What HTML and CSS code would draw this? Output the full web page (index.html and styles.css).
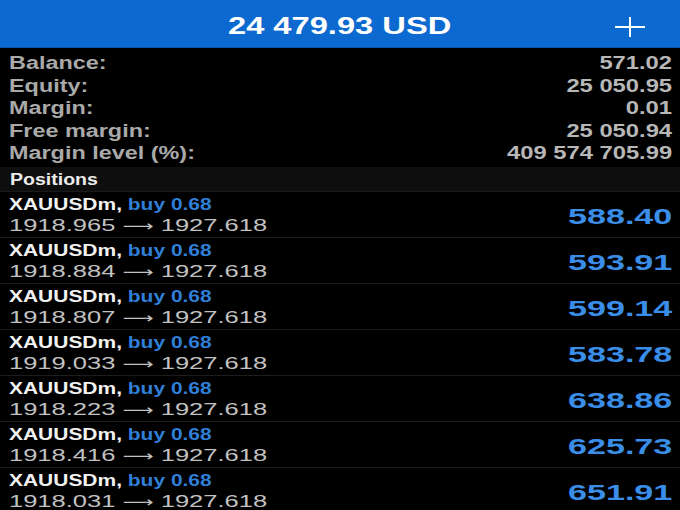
FILE: index.html
```html
<!DOCTYPE html>
<html>
<head>
<meta charset="utf-8">
<link rel="stylesheet" href="styles.css">
</head>
<body>
<div class="app">
  <header class="topbar">
    <div class="title"><span class="sx">24 479.93 USD</span></div>
    <button class="add" aria-label="add">
      <svg width="32" height="22" viewBox="0 0 32 22"><path d="M1 11H31M16 1V21" stroke="#ffffff" stroke-width="2" fill="none"/></svg>
    </button>
  </header>
  <section class="summary">
    <div class="srow"><span class="lbl sx">Balance:</span><span class="val sx">571.02</span></div>
    <div class="srow"><span class="lbl sx">Equity:</span><span class="val sx">25 050.95</span></div>
    <div class="srow"><span class="lbl sx">Margin:</span><span class="val sx">0.01</span></div>
    <div class="srow"><span class="lbl sx">Free margin:</span><span class="val sx">25 050.94</span></div>
    <div class="srow"><span class="lbl sx">Margin level (%):</span><span class="val sx">409 574 705.99</span></div>
  </section>
  <div class="sect"><span class="sx">Positions</span></div>
  <ul class="positions">
    <li class="pos"><div class="info"><div class="name"><span class="sx">XAUUSDm, <span class="buy">buy 0.68</span></span></div><div class="price"><span class="sx">1918.965 <span class="arr">⟶</span> 1927.618</span></div></div><div class="profit"><span class="sx">588.40</span></div></li>
    <li class="pos"><div class="info"><div class="name"><span class="sx">XAUUSDm, <span class="buy">buy 0.68</span></span></div><div class="price"><span class="sx">1918.884 <span class="arr">⟶</span> 1927.618</span></div></div><div class="profit"><span class="sx">593.91</span></div></li>
    <li class="pos"><div class="info"><div class="name"><span class="sx">XAUUSDm, <span class="buy">buy 0.68</span></span></div><div class="price"><span class="sx">1918.807 <span class="arr">⟶</span> 1927.618</span></div></div><div class="profit"><span class="sx">599.14</span></div></li>
    <li class="pos"><div class="info"><div class="name"><span class="sx">XAUUSDm, <span class="buy">buy 0.68</span></span></div><div class="price"><span class="sx">1919.033 <span class="arr">⟶</span> 1927.618</span></div></div><div class="profit"><span class="sx">583.78</span></div></li>
    <li class="pos"><div class="info"><div class="name"><span class="sx">XAUUSDm, <span class="buy">buy 0.68</span></span></div><div class="price"><span class="sx">1918.223 <span class="arr">⟶</span> 1927.618</span></div></div><div class="profit"><span class="sx">638.86</span></div></li>
    <li class="pos"><div class="info"><div class="name"><span class="sx">XAUUSDm, <span class="buy">buy 0.68</span></span></div><div class="price"><span class="sx">1918.416 <span class="arr">⟶</span> 1927.618</span></div></div><div class="profit"><span class="sx">625.73</span></div></li>
    <li class="pos"><div class="info"><div class="name"><span class="sx">XAUUSDm, <span class="buy">buy 0.68</span></span></div><div class="price"><span class="sx">1918.031 <span class="arr">⟶</span> 1927.618</span></div></div><div class="profit"><span class="sx">651.91</span></div></li>
  </ul>
</div>
</body>
</html>
```
FILE: styles.css
```css
* { box-sizing: border-box; }
html, body {
  margin: 0;
  padding: 0;
  background: #000;
  width: 680px;
  height: 510px;
  overflow: hidden;
}
body {
  font-family: "Liberation Sans", Arial, sans-serif;
  font-weight: bold;
}
.app {
  width: 680px;
}
.sx {
  display: inline-block;
  white-space: nowrap;
  transform-origin: left center;
}
.topbar {
  height: 48px;
  background: #0b69cf;
  display: flex;
  justify-content: center;
  align-items: flex-start;
  padding-top: 5px;
  border-bottom: 1px solid #0a58ad;
}
.title {
  color: #ffffff;
  font-size: 23px;
  line-height: 42px;
}
.title .sx {
  transform: scaleX(1.42);
  transform-origin: center center;
}
.add {
  position: absolute;
  left: 614px;
  top: 16px;
  background: none;
  border: 0;
  padding: 0;
  margin: 0;
  width: 32px;
  height: 22px;
  display: block;
}
.add svg { display: block; }
.summary {
  padding: 4px 8px 2px 9px;
}
.srow {
  display: flex;
  justify-content: space-between;
  font-size: 18px;
  line-height: 22.5px;
  height: 22.5px;
}
.lbl {
  color: #a9a9a9;
  transform: scaleX(1.3);
}
.val {
  color: #b7b7b7;
  transform: scaleX(1.32);
  transform-origin: right center;
}
.sect {
  background: #0e0e0e;
  color: #ececec;
  font-size: 16px;
  line-height: 25px;
  height: 25px;
  padding-left: 10px;
  border-bottom: 1px solid #1a1a1a;
}
.sect .sx {
  transform: scaleX(1.22);
}
.positions {
  list-style: none;
  margin: 0;
  padding: 0;
}
.pos {
  display: flex;
  justify-content: space-between;
  align-items: center;
  height: 46px;
  padding: 2px 8px 0 9px;
  border-bottom: 1px solid #1d1d1d;
}
.info {
  display: flex;
  flex-direction: column;
}
.name {
  color: #f2f2f2;
  font-size: 16px;
  line-height: 20px;
}
.name .sx {
  transform: scaleX(1.31);
}
.buy {
  color: #2f7fd8;
}
.price {
  color: #c2c2c2;
  font-weight: normal;
  font-size: 17px;
  line-height: 21px;
}
.price .sx {
  transform: scaleX(1.5);
}
.arr {
  font-family: "DejaVu Sans", sans-serif;
  font-size: 14.5px;
  line-height: 1;
}
.profit {
  color: #3a8ee8;
  font-size: 22px;
  padding-top: 4px;
}
.profit .sx {
  transform: scaleX(1.55);
  transform-origin: right center;
}
```
